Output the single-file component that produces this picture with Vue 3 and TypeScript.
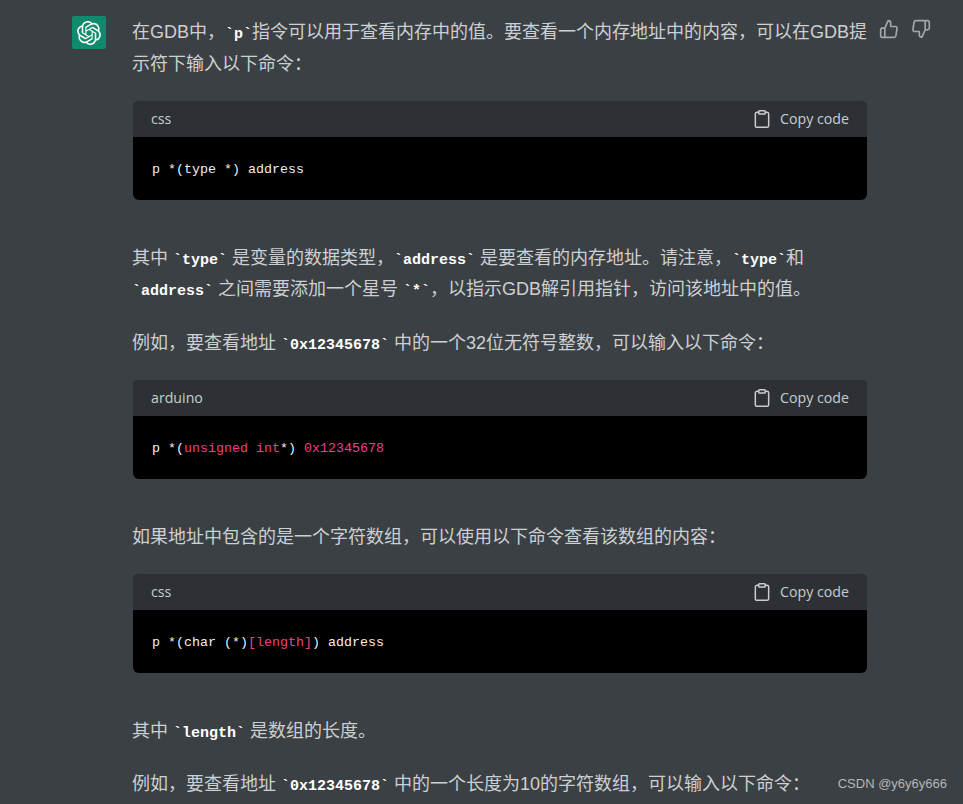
<script setup lang="ts">
const logo =
  'M22.2819 9.8211a5.9847 5.9847 0 0 0-.5157-4.9108 6.0462 6.0462 0 0 0-6.5098-2.9A6.0651 6.0651 0 0 0 4.9807 4.1818a5.9847 5.9847 0 0 0-3.9977 2.9 6.0462 6.0462 0 0 0 .7427 7.0966 5.98 5.98 0 0 0 .511 4.9107 6.051 6.051 0 0 0 6.5146 2.9001A5.9847 5.9847 0 0 0 13.2599 24a6.0557 6.0557 0 0 0 5.7718-4.2058 5.9894 5.9894 0 0 0 3.9977-2.9001 6.0557 6.0557 0 0 0-.7475-7.0729zm-9.022 12.6081a4.4755 4.4755 0 0 1-2.8764-1.0408l.1419-.0804 4.7783-2.7582a.7948.7948 0 0 0 .3927-.6813v-6.7369l2.02 1.1686a.071.071 0 0 1 .038.052v5.5826a4.504 4.504 0 0 1-4.4945 4.4944zm-9.6607-4.1254a4.4708 4.4708 0 0 1-.5346-3.0137l.142.0852 4.783 2.7582a.7712.7712 0 0 0 .7806 0l5.8428-3.3685v2.3324a.0804.0804 0 0 1-.0332.0615L9.74 19.9502a4.4992 4.4992 0 0 1-6.1408-1.6464zM2.3408 7.8956a4.485 4.485 0 0 1 2.3655-1.9728V11.6a.7664.7664 0 0 0 .3879.6765l5.8144 3.3543-2.0201 1.1685a.0757.0757 0 0 1-.071 0l-4.8303-2.7865A4.504 4.504 0 0 1 2.3408 7.872zm16.5963 3.8558L13.1038 8.364 15.1192 7.2a.0757.0757 0 0 1 .071 0l4.8303 2.7913a4.4944 4.4944 0 0 1-.6765 8.1042v-5.6772a.79.79 0 0 0-.407-.667zm2.0107-3.0231l-.142-.0852-4.7735-2.7818a.7759.7759 0 0 0-.7854 0L9.409 9.2297V6.8974a.0662.0662 0 0 1 .0284-.0615l4.8303-2.7866a4.4992 4.4992 0 0 1 6.6802 4.66zM8.3065 12.863l-2.02-1.1638a.0804.0804 0 0 1-.038-.0567V6.0742a4.4992 4.4992 0 0 1 7.3757-3.4537l-.142.0805L8.704 5.459a.7948.7948 0 0 0-.3927.6813zm1.0976-2.3654l2.602-1.4998 2.6069 1.4998v2.9994l-2.5974 1.4997-2.6067-1.4997Z'
</script>

<template>
  <main class="page">
    <div class="avatar">
      <svg width="24" height="24" viewBox="0 0 24 24" fill="#fff"><path :d="logo" /></svg>
    </div>

    <section class="content">
      <p>在GDB中，<code>`p`</code>指令可以用于查看内存中的值。要查看一个内存地址中的内容，可以在GDB提示符下输入以下命令：</p>

      <div class="code-block">
        <div class="code-head">
          <span>css</span>
          <span class="copy">
            <svg width="20" height="20" viewBox="0 0 24 24" fill="none" stroke="currentColor" stroke-width="1.8" stroke-linecap="round" stroke-linejoin="round"><path d="M16 4h2a2 2 0 0 1 2 2v14a2 2 0 0 1-2 2H6a2 2 0 0 1-2-2V6a2 2 0 0 1 2-2h2" /><rect x="8" y="2" width="8" height="4" rx="1" ry="1" /></svg>
            Copy code
          </span>
        </div>
        <pre class="code-body">p *(type *) address</pre>
      </div>

      <p class="after-code">其中 <code>`type`</code> 是变量的数据类型，<code>`address`</code> 是要查看的内存地址。请注意，<code>`type`</code>和 <code>`address`</code> 之间需要添加一个星号 <code>`*`</code>，以指示GDB解引用指针，访问该地址中的值。</p>
      <p>例如，要查看地址 <code>`0x12345678`</code> 中的一个32位无符号整数，可以输入以下命令：</p>

      <div class="code-block">
        <div class="code-head">
          <span>arduino</span>
          <span class="copy">
            <svg width="20" height="20" viewBox="0 0 24 24" fill="none" stroke="currentColor" stroke-width="1.8" stroke-linecap="round" stroke-linejoin="round"><path d="M16 4h2a2 2 0 0 1 2 2v14a2 2 0 0 1-2 2H6a2 2 0 0 1-2-2V6a2 2 0 0 1 2-2h2" /><rect x="8" y="2" width="8" height="4" rx="1" ry="1" /></svg>
            Copy code
          </span>
        </div>
        <pre class="code-body">p *(<span class="pink">unsigned int</span>*) <span class="pink">0x12345678</span></pre>
      </div>

      <p class="after-code">如果地址中包含的是一个字符数组，可以使用以下命令查看该数组的内容：</p>

      <div class="code-block">
        <div class="code-head">
          <span>css</span>
          <span class="copy">
            <svg width="20" height="20" viewBox="0 0 24 24" fill="none" stroke="currentColor" stroke-width="1.8" stroke-linecap="round" stroke-linejoin="round"><path d="M16 4h2a2 2 0 0 1 2 2v14a2 2 0 0 1-2 2H6a2 2 0 0 1-2-2V6a2 2 0 0 1 2-2h2" /><rect x="8" y="2" width="8" height="4" rx="1" ry="1" /></svg>
            Copy code
          </span>
        </div>
        <pre class="code-body">p *(char (*)<span class="pink">[length]</span>) address</pre>
      </div>

      <p class="after-code">其中 <code>`length`</code> 是数组的长度。</p>
      <p>例如，要查看地址 <code>`0x12345678`</code> 中的一个长度为10的字符数组，可以输入以下命令：</p>
    </section>

    <div class="thumbs">
      <svg width="20" height="20" viewBox="0 0 24 24" fill="none" stroke="currentColor" stroke-width="2" stroke-linecap="round" stroke-linejoin="round"><path d="M14 9V5a3 3 0 0 0-3-3l-4 9v11h11.28a2 2 0 0 0 2-1.7l1.38-9a2 2 0 0 0-2-2.3zM7 22H4a2 2 0 0 1-2-2v-7a2 2 0 0 1 2-2h3" /></svg>
      <svg width="20" height="20" viewBox="0 0 24 24" fill="none" stroke="currentColor" stroke-width="2" stroke-linecap="round" stroke-linejoin="round"><path d="M10 15v4a3 3 0 0 0 3 3l4-9V2H5.72a2 2 0 0 0-2 1.7l-1.38 9a2 2 0 0 0 2 2.3zm7-13h2.67A2.31 2.31 0 0 1 22 4v7a2.31 2.31 0 0 1-2.33 2H17" /></svg>
    </div>

    <div class="watermark">CSDN @y6y6y666</div>
  </main>
</template>

<style scoped>
.page {
  position: relative;
  box-sizing: border-box;
  height: 804px;
  overflow: hidden;
  display: flex;
  align-items: flex-start;
  padding: 16px 0 0 72px;
  background: #3b4044;
  color: #cdd0d2;
  font-family: "Liberation Sans", "Noto Sans CJK SC", sans-serif;
  font-size: 18px;
  line-height: 31.5px;
}

.avatar {
  flex: none;
  width: 34px;
  height: 33px;
  margin: 0 27px 0 0;
  display: flex;
  align-items: center;
  justify-content: center;
  border-radius: 2px;
  background: #0f8a6c;
}

.content {
  flex: none;
  width: 734px;
}

p {
  margin: 0 -3px 21px -1px;
  padding-top: 1px;
}

.after-code {
  margin-top: 41.5px;
}

code {
  font-family: "Liberation Mono", monospace;
  font-size: 15px;
  font-weight: 700;
  line-height: 0;
  color: #fff;
}

.code-block {
  border-radius: 6px;
  overflow: hidden;
  background: #000;
}

.code-head {
  height: 36px;
  padding: 0 18px;
  display: flex;
  align-items: center;
  justify-content: space-between;
  background: #2d3135;
  color: #c9cdcf;
  font-family: "Open Sans", sans-serif;
  font-size: 14.2px;
  line-height: 20px;
}

.copy {
  display: flex;
  align-items: center;
  gap: 8px;
}

.code-body {
  margin: 0;
  height: 63px;
  padding: 0 19px;
  color: #f0f0f0;
  font-family: "Liberation Mono", monospace;
  font-size: 13.33px;
  line-height: 66px;
}

.pink {
  color: #f0407c;
}

.thumbs {
  flex: none;
  margin: 3px 0 0 12px;
  display: flex;
  gap: 12px;
  color: #a3a6a8;
}

.watermark {
  position: absolute;
  right: 16px;
  bottom: 11px;
  color: #b4b7b9;
  font-family: "Liberation Sans", sans-serif;
  font-size: 13px;
  line-height: 18px;
}
</style>
